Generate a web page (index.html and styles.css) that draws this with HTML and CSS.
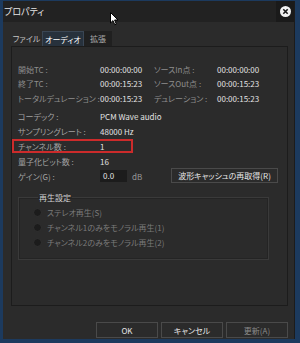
FILE: index.html
```html
<!DOCTYPE html>
<html lang="ja">
<head>
<meta charset="utf-8">
<link rel="stylesheet" href="styles.css">
</head>
<body>
<div class="screen">
  <div class="dialog">
    <div class="titlebar">
      <span class="title">プロパティ</span>
      <div class="close">
        <svg width="11" height="11" viewBox="0 0 11 11"><circle cx="5.5" cy="5.5" r="5.5" fill="#f2f2f2"/><path d="M3.3 3.3 L7.7 7.7 M7.7 3.3 L3.3 7.7" stroke="#1a1a1a" stroke-width="1.6"/></svg>
      </div>
    </div>
    <div class="content">
      <div class="tabs">
        <div class="tab">ファイル</div>
        <div class="tab active">オーディオ</div>
        <div class="tab dim">拡張</div>
      </div>
      <div class="panel">
        <div class="sec1">
          <div class="row"><span class="lbl">開始TC :</span><span class="val">00:00:00:00</span><span class="lbl2">ソースIn点 :</span><span class="val">00:00:00:00</span></div>
          <div class="row"><span class="lbl">終了TC :</span><span class="val">00:00:15:23</span><span class="lbl2">ソースOut点 :</span><span class="val">00:00:15:23</span></div>
          <div class="row"><span class="lbl">トータルデュレーション :</span><span class="val">00:00:15:23</span><span class="lbl2">デュレーション :</span><span class="val">00:00:15:23</span></div>
        </div>
        <div class="sec2">
          <div class="row"><span class="lbl">コーデック :</span><span class="val">PCM Wave audio</span></div>
          <div class="row"><span class="lbl">サンプリングレート :</span><span class="val">48000 Hz</span></div>
          <div class="row"><span class="mark"></span><span class="lbl">チャンネル数 :</span><span class="val">1</span></div>
          <div class="row"><span class="lbl">量子化ビット数 :</span><span class="val">16</span></div>
          <div class="row"><span class="lbl">ゲイン(G) :</span><span class="input">0.0</span><span class="unit">dB</span><span class="btn wave">波形キャッシュの再取得(R)</span></div>
        </div>
        <fieldset class="group">
          <legend>再生設定</legend>
          <div class="radio"><span class="dot"></span>ステレオ再生(S)</div>
          <div class="radio"><span class="dot"></span>チャンネル1のみをモノラル再生(1)</div>
          <div class="radio"><span class="dot"></span>チャンネル2のみをモノラル再生(2)</div>
        </fieldset>
      </div>
      <div class="buttons">
        <span class="btn">OK</span>
        <span class="btn">キャンセル</span>
        <span class="btn off">更新(A)</span>
      </div>
    </div>
  </div>
  <svg class="cursor" width="9" height="14" viewBox="0 0 9 14"><path d="M0.5 0.5 L0.5 11 L3 8.6 L4.8 12.8 L6.3 12.1 L4.6 8 L8 8 Z" fill="#fff" stroke="#000" stroke-width="1"/></svg>
</div>
</body>
</html>
```
FILE: styles.css
```css
* { box-sizing: border-box; }
html, body { margin: 0; padding: 0; }
body {
  width: 300px;
  height: 343px;
  overflow: hidden;
  font-family: "Noto Sans CJK JP", "Noto Sans", sans-serif;
  font-feature-settings: "palt";
  font-size: 8px;
  line-height: 11px;
  color: #d8d8d8;
  white-space: nowrap;
}
.screen {
  position: relative;
  width: 300px;
  height: 343px;
  background: #1c3a5e;
  padding: 1px 5px 4px 3px;
}
.dialog {
  height: 338px;
  background: #2b2b2b;
  display: flex;
  flex-direction: column;
  border-right: 1px solid #1c1c1c;
}
.titlebar {
  height: 21px;
  background: #222222;
  display: flex;
  align-items: center;
  justify-content: space-between;
}
.title {
  padding-left: 1px;
  font-size: 9px;
  color: #e6e6e6;
}
.close {
  width: 18px;
  height: 21px;
  background: #1a1a1a;
  display: flex;
  align-items: center;
  justify-content: center;
}
.close svg { display: block; }
.content {
  padding: 9px 6px 0 8px;
  display: flex;
  flex-direction: column;
}
.tabs {
  display: flex;
  height: 15px;
}
.tab {
  height: 15px;
  width: 31px;
  display: flex;
  align-items: center;
  justify-content: center;
  color: #c4c4c4;
  background: #2b2b2b;
}
.tab.active {
  width: 42px;
  background: #27313c;
  color: #ffffff;
  border: 1px solid #3a4654;
  border-bottom: none;
}
.tab.dim {
  width: 28px;
  background: #202020;
  color: #a8a8a8;
}
.panel {
  height: 260px;
  border: 1px solid #1c1c1c;
  padding: 15px 9px 0 6px;
  display: flex;
  flex-direction: column;
}
.row {
  display: flex;
  align-items: center;
  position: relative;
}
.sec1 .row { height: 14.5px; }
.sec2 { margin-top: 3px; }
.sec2 .row { height: 15px; }
.lbl {
  width: 82px;
  flex: none;
  color: #8e8e8e;
}
.sec2 .lbl { color: #a2a2a2; }
.val {
  width: 54px;
  flex: none;
  color: #e2e2e2;
}
.lbl2 {
  width: 63px;
  flex: none;
  color: #8e8e8e;
}
.mark {
  position: absolute;
  left: -6px;
  top: 0.5px;
  width: 121px;
  height: 14px;
  border: 2px solid #cc2b2b;
}
.input {
  width: 27px;
  height: 12px;
  background: #1c1c1c;
  color: #e2e2e2;
  padding-left: 3px;
  line-height: 12px;
}
.unit {
  margin-left: 5px;
  color: #9a9a9a;
}
.btn {
  height: 15px;
  border: 1px solid #4a4a4a;
  background: #2b2b2b;
  color: #e6e6e6;
  display: flex;
  align-items: center;
  justify-content: center;
}
.btn.wave {
  margin-left: auto;
  width: 107px;
  margin-top: -2px;
}
.group {
  margin: 8px 9px 0 0;
  padding: 2px 0 9px 14px;
  border: 1px solid #3a3a3a;
  box-shadow: inset 0 0 0 1px #242424;
  min-width: 0;
}
.group legend {
  padding: 0 1px;
  margin-left: 5px;
  color: #d0d0d0;
  line-height: 11px;
}
.radio {
  height: 15px;
  display: flex;
  align-items: center;
  color: #7a7a7a;
}
.dot {
  width: 9px;
  height: 9px;
  border-radius: 50%;
  background: #1c1c1c;
  border: 1px solid #303030;
  margin-right: 5px;
}
.buttons {
  margin-top: 16px;
  display: flex;
  justify-content: flex-end;
  gap: 3px;
}
.buttons .btn {
  width: 62px;
  height: 16px;
}
.buttons .btn.off { color: #8a8a8a; }
.cursor {
  position: absolute;
  left: 110px;
  top: 12px;
}
```
